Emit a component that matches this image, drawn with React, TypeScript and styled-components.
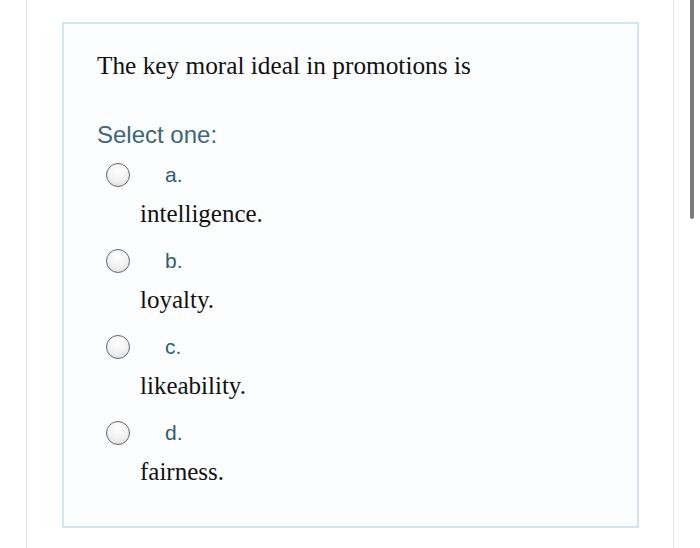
import React from 'react';
import styled, { createGlobalStyle } from 'styled-components';

const GlobalStyle = createGlobalStyle`
  html, body {
    margin: 0;
    padding: 0;
    background: #ffffff;
  }
  body {
    width: 700px;
    height: 548px;
    overflow: hidden;
  }
`;

const Page = styled.div`
  position: relative;
  width: 700px;
  height: 548px;
  background: #ffffff;
`;

const Column = styled.div`
  margin-left: 26px;
  width: 648px;
  height: 548px;
  border-left: 1px solid #e4e4e4;
  border-right: 1px solid #e4e4e4;
  padding-top: 22px;
  box-sizing: border-box;
`;

const Card = styled.div`
  margin-left: 35px;
  width: 577px;
  height: 506px;
  box-sizing: border-box;
  border: 2px solid #d2e5f1;
  background: #fcfdfe;
  padding: 26px 0 0 33px;
`;

const Question = styled.div`
  font-family: 'Liberation Serif', 'Times New Roman', serif;
  font-size: 25.3px;
  line-height: 30px;
  color: #111111;
`;

const Prompt = styled.div`
  margin-top: 41px;
  font-family: 'Liberation Sans', Arial, sans-serif;
  font-size: 24px;
  line-height: 28px;
  color: #3b6778;
`;

const Options = styled.div`
  display: flex;
  flex-direction: column;
  margin-top: 7px;
`;

const Option = styled.div`
  display: flex;
  flex-direction: column;
  height: 86px;
`;

const OptionHead = styled.div`
  display: flex;
  align-items: center;
  height: 38px;
`;

const Radio = styled.span`
  width: 24px;
  height: 24px;
  margin-left: 9px;
  box-sizing: border-box;
  border-radius: 50%;
  border: 1.5px solid #666666;
  background: radial-gradient(circle at 50% 30%, #ffffff 0%, #f1f1f1 55%, #d6d6d6 100%);
`;

const Letter = styled.span`
  margin-left: 35px;
  font-family: 'Liberation Sans', Arial, sans-serif;
  font-size: 21px;
  color: #2f5e70;
`;

const Answer = styled.div`
  margin-left: 43px;
  margin-top: 5px;
  font-family: 'Liberation Serif', 'Times New Roman', serif;
  font-size: 25px;
  line-height: 30px;
  color: #111111;
`;

const Scrollbar = styled.div`
  position: absolute;
  top: 0;
  left: 690px;
  width: 4px;
  height: 219px;
  border-radius: 0 0 2px 2px;
  background: #7b7b7b;
`;

const options = [
  { letter: 'a.', text: 'intelligence.' },
  { letter: 'b.', text: 'loyalty.' },
  { letter: 'c.', text: 'likeability.' },
  { letter: 'd.', text: 'fairness.' },
];

const App = () => (
  <>
    <GlobalStyle />
    <Page>
      <Column>
        <Card>
          <Question>The key moral ideal in promotions is</Question>
          <Prompt>Select one:</Prompt>
          <Options>
            {options.map((o) => (
              <Option key={o.letter}>
                <OptionHead>
                  <Radio />
                  <Letter>{o.letter}</Letter>
                </OptionHead>
                <Answer>{o.text}</Answer>
              </Option>
            ))}
          </Options>
        </Card>
      </Column>
      <Scrollbar />
    </Page>
  </>
);

export default App;
